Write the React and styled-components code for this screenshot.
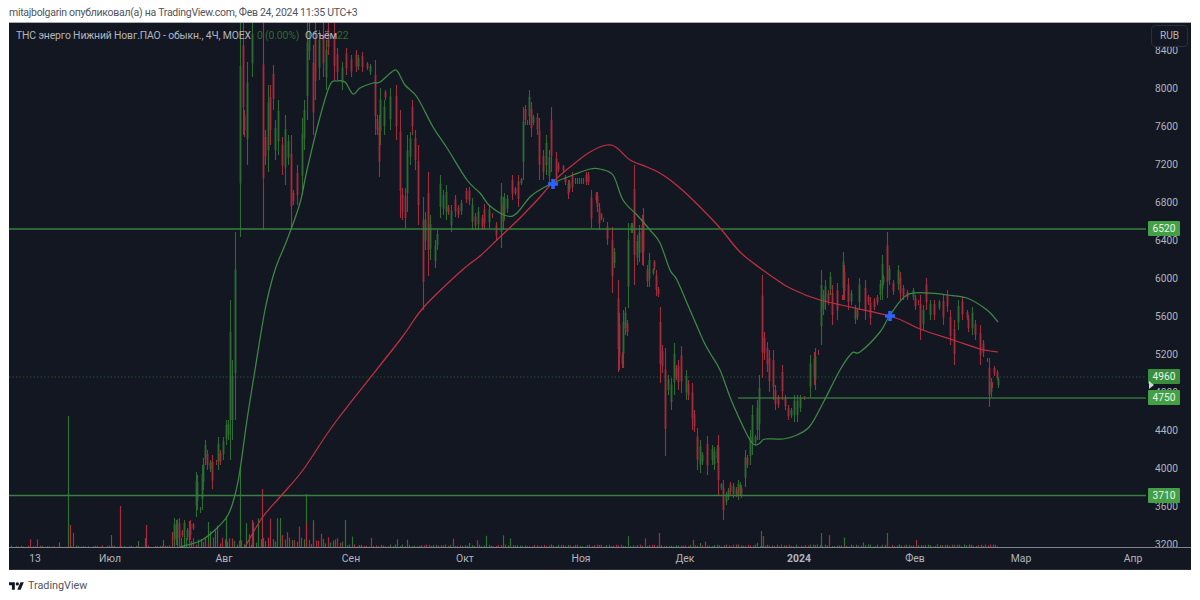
import React from "react";
import styled, { createGlobalStyle } from "styled-components";

const Global = createGlobalStyle`
  html, body { margin: 0; padding: 0; background: #fff; }
  body { width: 1200px; height: 600px; overflow: hidden; font-family: "Roboto", "Liberation Sans", sans-serif; }
`;

const Page = styled.div`
  width: 1200px; height: 600px; box-sizing: border-box; padding: 0 9px;
  display: flex; flex-direction: column; background: #fff;
`;
const Attribution = styled.div`
  height: 22px; line-height: 26px; font-size: 10.5px; color: #50535e; white-space: nowrap;
  letter-spacing: -0.28px;
`;
const ChartFrame = styled.div`
  position: relative; height: 548px; display: flex; background: #131722;
  border-top: 1px solid #a9acb5; box-sizing: border-box; width: 1182px;
  border-bottom: 1px solid #2a2e39;
`;
const PlotColumn = styled.div`
  width: 1137px; display: flex; flex-direction: column;
`;
const Plot = styled.div`
  position: relative; height: 524px; flex: none;
`;
const ChartSvg = styled.svg`
  display: block; width: 1137px; height: 524px; filter: blur(0.3px);
`;
const Legend = styled.div`
  position: absolute; left: 7px; top: 6px; display: flex; gap: 6px;
  font-size: 10.4px; line-height: 13px; white-space: nowrap; color: #b2b5be; letter-spacing: -0.14px;
`;
const LegendValue = styled.span`
  color: #2c6b32;
`;
const VolumeName = styled.span`
  color: #b2b5be;
`;
const TimeAxis = styled.div`
  flex: 1; display: flex; align-items: center; border-top: 1.5px solid #80838e;
`;
const TimeCell = styled.div`
  flex: none; text-align: center; font-size: 10.4px; color: #b2b5be;
  font-weight: ${(p) => (p.$bold ? 700 : 400)};
`;
const PriceScale = styled.div`
  position: relative; width: 45px; box-sizing: border-box; padding-top: 9px;
  display: flex; flex-direction: column; overflow: hidden;
  &::after {
    content: ""; position: absolute; left: 0; right: 0; top: 523.5px; height: 1.5px; background: #80838e;
  }
`;
const PriceLabel = styled.div`
  flex: none; height: 38px; line-height: 38px; padding-left: 9px; font-size: 10.2px; color: #b2b5be;
`;
const RubButton = styled.div`
  position: absolute; left: 5px; top: 2px; width: 37px; height: 22px; box-sizing: border-box;
  border: 1px solid #2a2e39; border-radius: 4px; background: #131722;
  font-size: 10.2px; line-height: 20px; text-align: center; color: #b2b5be;
`;
const PriceTag = styled.div`
  position: absolute; left: 2px; width: 32px; height: 15px; line-height: 15px; text-align: center;
  font-size: 10.2px; color: #e8f5e9; border-radius: 1px; background: ${(p) => p.$bg};
`;
const LastArrow = styled.div`
  position: absolute; left: 3px; top: 358px; width: 0; height: 0;
  border-left: 5px solid #d1d4dc; border-top: 4.5px solid transparent; border-bottom: 4.5px solid transparent;
`;
const Footer = styled.div`
  flex: 1; display: flex; align-items: center; gap: 4px; padding-top: 1px;
`;
const Wordmark = styled.span`
  font-size: 10.8px; color: #50535e; letter-spacing: 0;
`;

const GREEN = "#2d6b33";
const RED = "#a22c3b";
const LINE_GREEN = "#3a7f40";
const MA_GREEN = "#3d8a44";
const MA_RED = "#c0303f";

const g = (x, t, b) => [x, t, b, "g"];
const r = (x, t, b) => [x, t, b, "r"];

const BARS = [
  g(174,518,547),g(176,520,545),r(179,518,545),r(182,530,537),g(184,520,535),g(187,528,540),r(190,520,540),r(193,523,530),
  g(196,472,517),g(197,475,510),g(200,507,513),g(202,465,510),g(203,458,490),g(205,440,465),r(207,450,470),g(210,460,472),
  r(212,455,489),r(216,460,465),g(218,437,470),r(220,450,465),g(223,437,460),g(226,420,445),g(228,420,440),
  g(230,300,460),g(232,360,440),g(235,232,420),
  g(240,23,237),r(243,23,135),r(244,110,137),g(247,62,165),g(252,23,77),r(263,23,230),r(265,130,165),g(268,85,172),r(270,85,145),
  r(273,65,110),g(275,120,160),g(278,100,155),r(282,137,175),g(285,115,185),g(288,135,165),r(291,135,230),r(293,190,205),r(297,165,205),
  g(302,118,195),g(304,100,150),g(307,23,120),g(309,23,60),r(313,45,135),r(315,23,100),g(319,30,80),r(323,23,77),g(326,40,90),r(328,23,55),
  r(334,23,80),r(337,48,80),g(342,62,90),r(346,48,75),r(351,55,77),r(356,50,72),g(358,55,70),r(362,52,72),r(367,62,70),g(370,64,75),
  r(375,60,135),g(380,88,145),r(379,115,177),g(384,100,135),r(377,115,135),r(385,90,100),g(390,88,130),r(396,85,140),
  r(400,110,218),r(402,188,220),r(405,188,228),g(407,135,212),g(410,132,165),r(412,100,135),r(415,130,170),r(418,145,225),
  r(423,197,310),g(425,212,250),r(428,172,276),g(430,215,260),g(435,240,268),g(437,230,250),g(440,175,218),g(443,190,215),g(446,185,220),
  r(448,205,215),g(451,205,232),r(455,195,217),r(458,205,218),g(461,200,215),r(466,188,203),r(469,187,205),g(472,198,230),r(475,213,230),
  g(478,207,230),r(482,215,230),r(484,204,230),g(489,205,228),r(492,213,218),r(496,222,240),
  g(501,183,248),r(503,197,230),g(504,193,220),g(507,195,213),r(512,175,200),r(515,187,195),r(518,175,207),g(521,178,185),
  g(523,107,180),r(525,105,125),r(527,120,125),g(529,90,125),r(531,102,137),g(533,115,125),r(537,113,135),r(539,118,180),r(543,150,180),g(546,135,175),g(549,150,185),
  r(551,107,172),r(556,152,185),r(558,162,172),r(563,165,172),r(565,175,185),r(568,180,199),g(569,180,192),r(572,172,192),
  g(575,178,184),g(577,178,184),g(579,178,184),g(581,178,184),g(583,178,184),r(586,172,185),r(588,172,185),
  r(591,190,228),r(596,192,203),r(597,192,212),r(599,203,230),r(601,213,220),r(603,218,222),r(607,222,245),r(612,227,293),g(614,248,268),
  r(618,280,372),r(619,313,370),r(622,352,368),g(623,310,368),g(625,307,335),r(627,320,336),g(628,223,308),g(631,223,233),g(632,223,233),
  r(634,165,285),g(637,235,265),g(639,225,262),r(642,215,265),r(643,208,266),r(647,265,287),g(649,253,287),g(653,268,275),r(654,260,270),
  r(656,270,296),r(658,287,297),r(660,307,383),r(662,345,373),r(665,348,456),g(668,375,395),g(671,378,410),g(674,343,395),r(676,365,380),r(678,360,390),
  r(681,346,393),g(686,370,400),r(688,380,400),r(692,383,430),r(694,410,432),r(697,428,470),g(700,440,473),g(702,452,465),r(707,436,475),
  g(712,445,465),g(714,447,470),g(717,445,463),r(718,435,495),g(721,483,490),r(723,480,520),g(726,492,505),g(728,488,500),r(730,482,495),g(733,483,498),
  r(736,487,497),g(738,480,500),g(740,482,496),r(741,485,498),g(745,450,487),r(747,455,468),g(750,430,465),g(752,405,455),g(755,435,445),
  g(757,400,440),g(759,375,440),r(762,275,378),r(764,332,360),r(767,342,372),r(769,350,392),r(773,350,400),r(775,385,410),r(778,395,408),r(782,365,400),r(785,395,410),
  r(788,405,420),g(791,408,418),g(794,395,422),g(797,395,422),g(800,395,412),r(804,396,400),g(810,355,397),r(814,352,385),g(815,348,390),r(818,350,355),
  g(821,270,345),g(823,290,315),g(825,280,310),r(828,290,305),g(830,272,295),r(832,285,325),r(837,283,320),r(842,295,300),g(843,252,300),r(844,265,300),r(848,278,310),
  g(851,290,305),g(855,305,324),r(857,308,320),g(859,278,310),r(865,280,320),r(868,295,305),r(870,297,325),r(874,298,310),r(877,295,305),g(880,280,300),g(882,255,300),g(883,275,285),
  r(887,232,298),g(889,265,285),r(893,280,295),g(898,265,290),r(900,272,300),r(903,285,300),r(907,290,300),g(913,288,300),r(915,295,310),r(918,300,305),r(920,295,340),
  g(923,305,330),r(926,278,310),g(930,300,320),r(934,300,320),g(939,300,310),r(943,295,325),r(947,290,312),r(950,310,345),r(954,320,365),g(958,300,330),r(962,297,320),
  r(967,310,320),r(968,315,332),g(972,307,335),r(975,320,340),r(980,325,365),r(983,340,357),r(987,358,362),r(989,358,407),g(991,378,397),r(992,382,388),r(994,366,376),r(997,370,380),g(998,377,388),
];

const TALL_VOLUME = [
  g(68,416,547),r(70,525,547),r(73,533,547),g(111,535,547),r(120,506,547),r(145,538,547),r(146,525,547),g(163,540,547),
  g(240,467,547),r(262,489,547),g(306,494,547),r(313,522,547),g(280,518,547),g(226,516,547),g(208,522,547),r(252,520,547),
  r(659,533,547),g(761,531,547),r(763,536,547),g(821,533,547),g(887,533,547),
];

function makeVolume() {
  let seed = 12345;
  const rnd = () => { seed = (seed * 16807) % 2147483647; return (seed - 1) / 2147483646; };
  const out = [...TALL_VOLUME];
  for (let x = 11; x < 999; x += 2.4) {
    const u = rnd();
    let h;
    if (x < 170) h = u > 0.93 ? 3 + rnd() * 5 : rnd() * 1.6;
    else if (x < 345) h = u > 0.55 ? 8 + rnd() * 22 : 2 + rnd() * 8;
    else h = u > 0.93 ? 4 + rnd() * 8 : 0.6 + rnd() * 2;
    out.push([Math.round(x), 547 - h, 547, rnd() > 0.45 ? "g" : "r"]);
  }
  return out;
}
const VOLUME = makeVolume();

const MA_G = [[180,547],[200,541],[215,530],[228,515],[235,495],[240,470],[247,420],[255,370],[265,310],[275,270],[287,240],[300,203],[307,170],[320,117],[330,85],[337,81],[345,82],[353,94],[360,88],[373,83],[380,82],[393,71],[398,72],[405,85],[417,97],[433,127],[447,148],[467,180],[480,193],[490,206],[507,216],[517,213],[530,197],[543,188],[553,183],[573,175],[590,169],[600,169],[613,175],[623,200],[637,215],[650,230],[660,243],[670,270],[677,280],[690,310],[703,340],[710,353],[720,370],[730,397],[740,420],[750,440],[755,445],[760,443],[765,439],[783,439],[797,435],[810,426],[823,403],[840,370],[852,353],[860,352],[880,332],[890,315],[907,295],[930,293],[947,295],[967,298],[987,310],[998,322]];
const MA_R = [[245,547],[262,518],[280,497],[303,470],[337,420],[400,340],[423,308],[460,272],[480,256],[500,237],[520,218],[540,197],[553,182],[570,167],[590,152],[607,145],[617,148],[630,160],[647,167],[663,175],[680,188],[700,207],[720,228],[740,252],[760,268],[780,282],[790,288],[820,300],[890,316],[920,329],[953,340],[980,349],[998,352]];

// Catmull-Rom smoothing of the hand-read curve points
const smooth = (pts) => {
  let d = `M${pts[0][0]} ${pts[0][1]}`;
  for (let i = 0; i < pts.length - 1; i++) {
    const p0 = pts[Math.max(0, i - 1)], p1 = pts[i], p2 = pts[i + 1], p3 = pts[Math.min(pts.length - 1, i + 2)];
    const c1 = [p1[0] + (p2[0] - p0[0]) / 6, p1[1] + (p2[1] - p0[1]) / 6];
    const c2 = [p2[0] - (p3[0] - p1[0]) / 6, p2[1] - (p3[1] - p1[1]) / 6];
    d += `C${c1[0].toFixed(1)} ${c1[1].toFixed(1)} ${c2[0].toFixed(1)} ${c2[1].toFixed(1)} ${p2[0]} ${p2[1]}`;
  }
  return d;
};

const Candle = ({ bar: [x, t, b, c] }) => {
  const h = b - t;
  const color = c === "g" ? GREEN : RED;
  return (
    <>
      <line x1={x + 0.5} x2={x + 0.5} y1={t} y2={b} stroke={color} strokeWidth="1.1" />
      {h > 6 && <line x1={x + 0.5} x2={x + 0.5} y1={t + h * 0.2} y2={b - h * 0.25} stroke={color} strokeWidth="1.8" />}
    </>
  );
};

const Cross = ({ x, y }) => (
  <path d={`M${x - 5} ${y}H${x + 5}M${x} ${y - 5}V${y + 5}`} stroke="#2962ff" strokeWidth="3.6" fill="none" />
);

const Chart = () => (
  <ChartSvg viewBox="9 23 1137 524" xmlns="http://www.w3.org/2000/svg">
    <g strokeWidth="1.2">
      {VOLUME.map(([x, t, b, c], i) => (
        <line key={i} x1={x + 0.5} x2={x + 0.5} y1={t} y2={b} stroke={c === "g" ? "#2c7233" : "#ad2a3b"} />
      ))}
    </g>
    {BARS.map((bar, i) => <Candle key={i} bar={bar} />)}
    <g stroke={LINE_GREEN} strokeWidth="1.3" fill="none">
      <path d="M9 229H1146" />
      <path d="M9 495.5H1146" />
      <path d="M738 398H1146" strokeOpacity="0.85" />
      <path d="M9 377H1146" strokeDasharray="1.5 2" strokeOpacity="0.5" strokeWidth="1" />
    </g>
    <path d={smooth(MA_G)} fill="none" stroke={MA_GREEN} strokeWidth="1.25" />
    <path d={smooth(MA_R)} fill="none" stroke={MA_RED} strokeWidth="1.25" />
    <Cross x={553} y={184} />
    <Cross x={890} y={316} />
  </ChartSvg>
);

const Logo = () => (
  <svg width="15" height="10" viewBox="0 3 36 20" xmlns="http://www.w3.org/2000/svg">
    <path fill="#131722" d="M14 22H7V11H0V4h14v18zM28 22h-8l7.5-18h8L28 22z" />
    <circle fill="#131722" cx="20" cy="8" r="4" />
  </svg>
);

const TIME = [
  ["13", 52], ["Июл", 98], ["Авг", 130], ["Сен", 124], ["Окт", 104], ["Ноя", 128],
  ["Дек", 80], ["2024", 148, true], ["Фев", 84], ["Мар", 128], ["Апр", 96],
];
const PRICES = [8400, 8000, 7600, 7200, 6800, 6400, 6000, 5600, 5200, 4800, 4400, 4000, 3600, 3200];
const TAGS = [
  ["6520", 198, "#43a047"], ["4960", 346, "#388e3c"], ["4750", 367, "#43a047"], ["3710", 465, "#43a047"],
];

export default function App() {
  return (
    <Page>
      <Global />
      <Attribution>mitajbolgarin опубликовал(а) на TradingView.com, Фев 24, 2024 11:35 UTC+3</Attribution>
      <ChartFrame>
        <PlotColumn>
          <Plot>
            <Chart />
            <Legend>
              <span>ТНС энерго Нижний Новг.ПАО - обыкн., 4Ч, MOEX</span>
              <LegendValue>0 (0.00%)</LegendValue>
              <span><VolumeName>Объём</VolumeName><LegendValue>22</LegendValue></span>
            </Legend>
          </Plot>
          <TimeAxis>
            {TIME.map(([t, w, b]) => (
              <TimeCell key={t} $bold={b} style={{ width: w }}>{t}</TimeCell>
            ))}
          </TimeAxis>
        </PlotColumn>
        <PriceScale>
          {PRICES.map((p) => <PriceLabel key={p}>{p}</PriceLabel>)}
          <RubButton>RUB</RubButton>
          {TAGS.map(([t, top, bg]) => (
            <PriceTag key={t} $bg={bg} style={{ top }}>{t}</PriceTag>
          ))}
          <LastArrow />
        </PriceScale>
      </ChartFrame>
      <Footer>
        <Logo />
        <Wordmark>TradingView</Wordmark>
      </Footer>
    </Page>
  );
}
